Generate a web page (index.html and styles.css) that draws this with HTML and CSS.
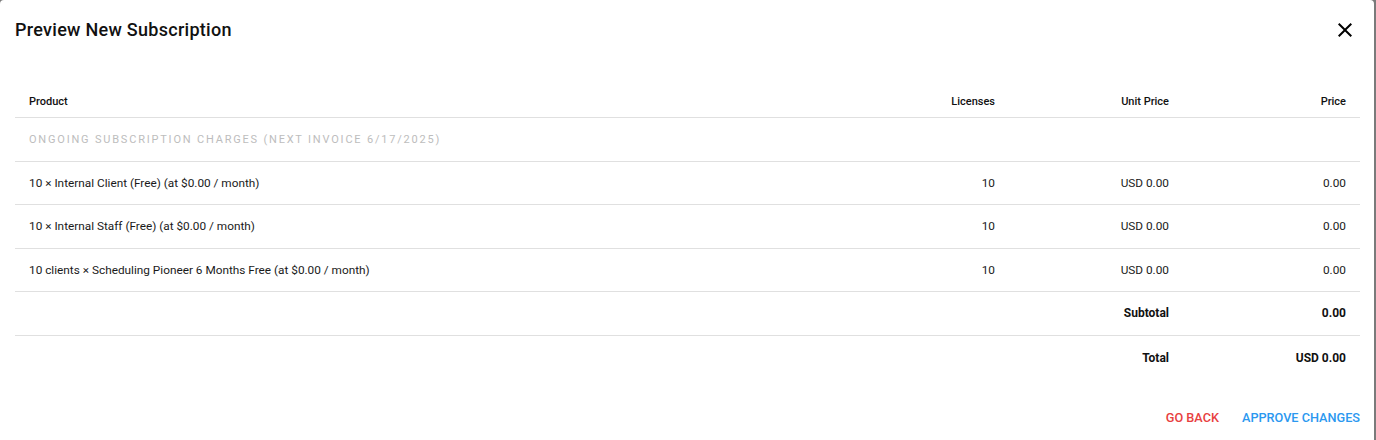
FILE: index.html
```html
<!DOCTYPE html>
<html>
<head>
<meta charset="utf-8">
<link rel="stylesheet" href="styles.css">
</head>
<body>
<div class="dialog">
  <div class="dialog-header">
    <h2 class="dialog-title">Preview New Subscription</h2>
    <button class="close-btn" aria-label="Close">
      <svg viewBox="0 0 24 24" width="24" height="24"><path d="M19 6.41 17.59 5 12 10.59 6.41 5 5 6.41 10.59 12 5 17.59 6.41 19 12 13.41 17.59 19 19 17.59 13.41 12z" fill="#000"/></svg>
    </button>
  </div>
  <div class="dialog-content">
    <table class="sub-table">
      <colgroup>
        <col>
        <col class="col-lic">
        <col class="col-unit">
        <col class="col-price">
      </colgroup>
      <thead>
        <tr>
          <th class="left">Product</th>
          <th>Licenses</th>
          <th>Unit Price</th>
          <th>Price</th>
        </tr>
      </thead>
      <tbody>
        <tr class="section">
          <td colspan="4">ONGOING SUBSCRIPTION CHARGES (NEXT INVOICE 6/17/2025)</td>
        </tr>
        <tr>
          <td class="left">10 × Internal Client (Free) (at $0.00 / month)</td>
          <td>10</td>
          <td>USD 0.00</td>
          <td>0.00</td>
        </tr>
        <tr>
          <td class="left">10 × Internal Staff (Free) (at $0.00 / month)</td>
          <td>10</td>
          <td>USD 0.00</td>
          <td>0.00</td>
        </tr>
        <tr>
          <td class="left">10 clients × Scheduling Pioneer 6 Months Free (at $0.00 / month)</td>
          <td>10</td>
          <td>USD 0.00</td>
          <td>0.00</td>
        </tr>
        <tr class="sum">
          <td></td>
          <td></td>
          <td>Subtotal</td>
          <td>0.00</td>
        </tr>
        <tr class="sum total">
          <td></td>
          <td></td>
          <td>Total</td>
          <td>USD 0.00</td>
        </tr>
      </tbody>
    </table>
  </div>
  <div class="dialog-actions">
    <button class="btn btn-back">GO BACK</button>
    <button class="btn btn-approve">APPROVE CHANGES</button>
  </div>
</div>
</body>
</html>
```

FILE: styles.css
```css
html, body {
  margin: 0;
  padding: 0;
  background: #7a7a7a;
  height: 100%;
  overflow: hidden;
}
body {
  font-family: Roboto, "Liberation Sans", Arial, sans-serif;
  color: rgba(0, 0, 0, 0.87);
}
.dialog {
  width: 1374px;
  height: 460px;
  background: #fff;
  border-radius: 4px;
  box-sizing: border-box;
}
.dialog-header {
  display: flex;
  align-items: center;
  justify-content: space-between;
  padding: 18px 12px 0 15px;
  height: 24px;
}
.dialog-title {
  margin: 0;
  font-size: 18px;
  font-weight: 500;
  line-height: 24px;
  letter-spacing: 0.28px;
  color: #111;
}
.close-btn {
  border: 0;
  background: none;
  padding: 0;
  width: 24px;
  height: 24px;
  margin-right: 5px;
  cursor: pointer;
  display: flex;
}
.dialog-content {
  padding: 46px 14px 0 15px;
}
.sub-table {
  width: 100%;
  border-collapse: collapse;
  table-layout: fixed;
  font-size: 11.8px;
}
.col-lic { width: 160px; }
.col-unit { width: 174px; }
.col-price { width: 177px; }
.sub-table th,
.sub-table td {
  text-align: right;
  padding: 0 14px;
  white-space: nowrap;
}
.sub-table th {
  font-size: 11px;
  font-weight: 500;
  height: 27px;
  padding-bottom: 2px;
  color: #111;
  border-bottom: 1px solid #e0e0e0;
}
.sub-table td {
  height: 42.5px;
  border-bottom: 1px solid #e0e0e0;
  color: #1a1a1a;
}
.sub-table .left {
  text-align: left;
}
.sub-table tr.section td {
  text-align: left;
  color: #bdbdbd;
  letter-spacing: 1.8px;
  font-size: 11px;
  height: 42.5px;
}
.sub-table tr.sum td {
  font-weight: 700;
  font-size: 12px;
  color: #111;
}
.sub-table tr.total td {
  border-bottom: 0;
  height: 44px;
}
.dialog-actions {
  display: flex;
  justify-content: flex-end;
  gap: 23px;
  padding: 30px 14px 0 0;
}
.btn {
  border: 0;
  background: none;
  padding: 0;
  font-family: Roboto, "Liberation Sans", Arial, sans-serif;
  font-size: 12.7px;
  font-weight: 500;
  line-height: 16px;
  cursor: pointer;
}
.btn-back { color: #e84040; }
.btn-approve { color: #2b98f0; }
```
